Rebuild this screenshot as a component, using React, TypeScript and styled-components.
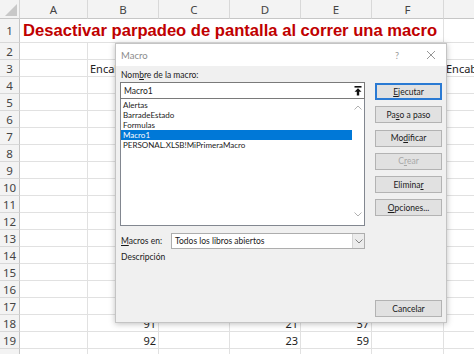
import React from 'react';
import styled, { createGlobalStyle } from 'styled-components';

const GlobalStyle = createGlobalStyle`
  html, body {
    margin: 0;
    padding: 0;
    background: #ffffff;
  }
  body {
    width: 474px;
    height: 354px;
    overflow: hidden;
    font-family: "Noto Sans", sans-serif;
  }
`;

const COLUMNS = ['A', 'B', 'C', 'D', 'E', 'F', 'G', ''];

// cell values by row number -> column letter
const DATA: Record<number, Record<string, string>> = {
  3: { B: 'Encabezado 1', G: 'Encabezado 5' },
  18: { B: '91', D: '21', E: '37' },
  19: { B: '92', D: '23', E: '59' },
  20: { B: '69', D: '90', E: '59' },
};

const NUMERIC = /^\d+$/;

const MACROS = ['Alertas', 'BarradeEstado', 'Formulas', 'Macro1', 'PERSONAL.XLSB!MiPrimeraMacro'];

const App = () => (
  <>
    <GlobalStyle />
    <Sheet>
      <Grid>
        <Corner>
          <svg width="12" height="12" viewBox="0 0 12 12">
            <polygon points="12,0 12,12 0,12" fill="#c8c8c8" />
          </svg>
        </Corner>
        {COLUMNS.map((c, i) => (
          <ColHeader key={i}>{c}</ColHeader>
        ))}

        <RowHeader>1</RowHeader>
        <TitleCell>Desactivar parpadeo de pantalla al correr una macro</TitleCell>
        <Cell />
        <Cell />

        {Array.from({ length: 19 }, (_, i) => i + 2).map(row => (
          <React.Fragment key={row}>
            <RowHeader>{row}</RowHeader>
            {COLUMNS.map((c, i) => {
              const value = (DATA[row] && DATA[row][c]) || '';
              return (
                <Cell key={i} $right={NUMERIC.test(value)}>
                  {value}
                </Cell>
              );
            })}
          </React.Fragment>
        ))}
      </Grid>

      <Dialog>
        <TitleBar>
          <DialogTitle>Macro</DialogTitle>
          <TitleButtons>
            <Help>?</Help>
            <svg width="10" height="10" viewBox="0 0 10 10">
              <path d="M1 1 L9 9 M9 1 L1 9" stroke="#8a8a8a" strokeWidth="0.9" />
            </svg>
          </TitleButtons>
        </TitleBar>

        <Body>
          <LeftColumn>
            <Label>
              Nom<u>b</u>re de la macro:
            </Label>
            <NameInput>
              <span>Macro1</span>
              <InputIcon>
                <svg width="8" height="10" viewBox="0 0 8 10">
                  <rect x="0.5" y="0" width="7" height="1.6" fill="#111" />
                  <path d="M4 2.2 L7.5 5.8 L5.2 5.8 L5.2 9.6 L2.8 9.6 L2.8 5.8 L0.5 5.8 Z" fill="#111" />
                </svg>
              </InputIcon>
            </NameInput>
            <MacroList>
              <Items>
                {MACROS.map(m => (
                  <Item key={m} $selected={m === 'Macro1'}>
                    {m}
                  </Item>
                ))}
              </Items>
              <Scrollbar>
                <svg width="8" height="5" viewBox="0 0 8 5">
                  <path d="M0.5 4.5 L4 1 L7.5 4.5" stroke="#a8a8a8" fill="none" strokeWidth="0.9" />
                </svg>
                <svg width="8" height="5" viewBox="0 0 8 5">
                  <path d="M0.5 0.5 L4 4 L7.5 0.5" stroke="#a8a8a8" fill="none" strokeWidth="0.9" />
                </svg>
              </Scrollbar>
            </MacroList>

            <ComboRow>
              <Label>
                <u>M</u>acros en:
              </Label>
              <Combo>
                <span>Todos los libros abiertos</span>
                <ComboArrow>
                  <svg width="8" height="5" viewBox="0 0 8 5">
                    <path d="M0.5 0.5 L4 4 L7.5 0.5" stroke="#777" fill="none" strokeWidth="0.9" />
                  </svg>
                </ComboArrow>
              </Combo>
            </ComboRow>
            <Description>Descripción</Description>
          </LeftColumn>

          <Buttons>
            <Button $focused>
              <u>E</u>jecutar
            </Button>
            <Button>
              Pa<u>s</u>o a paso
            </Button>
            <Button>
              Mo<u>d</u>ificar
            </Button>
            <Button $disabled>
              C<u>r</u>ear
            </Button>
            <Button>
              Elimina<u>r</u>
            </Button>
            <Button>
              <u>O</u>pciones...
            </Button>
            <CancelButton>Cancelar</CancelButton>
          </Buttons>
        </Body>
      </Dialog>
    </Sheet>
  </>
);

const Sheet = styled.div`
  position: relative;
  width: 474px;
  height: 354px;
  overflow: hidden;
`;

const Grid = styled.div`
  display: grid;
  grid-template-columns: 20px 68px 71px 71px 71px 71px 72px 72px 40px;
  grid-template-rows: 19px 24px repeat(19, 17px);
  font-family: "Noto Sans", sans-serif;
  color: #222;
`;

const Corner = styled.div`
  background: #f3f3f3;
  border-right: 1px solid #d4d4d4;
  border-bottom: 1px solid #c6c6c6;
  display: flex;
  align-items: flex-end;
  justify-content: flex-end;
  padding: 0 2px 2px 0;
`;

const ColHeader = styled.div`
  background: #f3f3f3;
  border-right: 1px solid #d8d8d8;
  border-bottom: 1px solid #c6c6c6;
  display: flex;
  align-items: center;
  justify-content: center;
  font-size: 11.5px;
  color: #444;
`;

const RowHeader = styled.div`
  background: #f3f3f3;
  border-right: 1px solid #c6c6c6;
  border-bottom: 1px solid #d8d8d8;
  display: flex;
  align-items: center;
  justify-content: center;
  font-size: 11.5px;
  color: #444;
`;

const Cell = styled.div<{ $right?: boolean }>`
  border-right: 1px solid #e1e1e1;
  border-bottom: 1px solid #e1e1e1;
  display: flex;
  align-items: center;
  justify-content: ${p => (p.$right ? 'flex-end' : 'flex-start')};
  padding: 0 2px;
  font-size: 11px;
  white-space: nowrap;
  overflow: visible;
  min-width: 0;
`;

const TitleCell = styled.div`
  grid-column: 2 / 8;
  border-bottom: 1px solid #e1e1e1;
  border-right: 1px solid #e1e1e1;
  display: flex;
  align-items: center;
  padding: 0 3px;
  font-family: "Liberation Sans", Arial, sans-serif;
  font-weight: bold;
  font-size: 16.6px;
  color: #c00000;
  white-space: nowrap;
`;

const Dialog = styled.div`
  position: absolute;
  left: 115px;
  top: 43px;
  width: 332px;
  height: 280px;
  box-sizing: border-box;
  border: 1px solid #c4c4c4;
  box-shadow: 0 1px 6px rgba(0, 0, 0, 0.25);
  background: #f0f0f0;
  display: flex;
  flex-direction: column;
  font-family: Lato, "Noto Sans", sans-serif;
  font-size: 8.5px;
  color: #1a1a1a;
`;

const TitleBar = styled.div`
  height: 22px;
  background: #ffffff;
  display: flex;
  align-items: center;
  justify-content: space-between;
  padding: 0 10px 0 5px;
  flex-shrink: 0;
`;

const DialogTitle = styled.span`
  font-size: 9.5px;
  color: #8c8c8c;
`;

const TitleButtons = styled.div`
  display: flex;
  align-items: center;
  gap: 27px;
`;

const Help = styled.span`
  font-size: 9px;
  color: #9a9a9a;
`;

const Body = styled.div`
  flex: 1;
  display: flex;
  padding: 3px 4px 5px 4px;
  gap: 10px;
`;

const LeftColumn = styled.div`
  width: 245px;
  display: flex;
  flex-direction: column;
`;

const Label = styled.div`
  line-height: 13px;
  padding-left: 1px;
  white-space: nowrap;
`;

const NameInput = styled.div`
  height: 17px;
  box-sizing: border-box;
  border: 1px solid #7a7a7a;
  background: #fff;
  display: flex;
  align-items: center;
  justify-content: space-between;
  padding-left: 3px;
`;

const InputIcon = styled.div`
  width: 12px;
  height: 100%;
  display: flex;
  align-items: center;
  justify-content: center;
`;

const MacroList = styled.div`
  height: 127px;
  box-sizing: border-box;
  border: 1px solid #828790;
  border-top: none;
  background: #fff;
  display: flex;
`;

const Items = styled.div`
  flex: 1;
  padding-top: 1px;
`;

const Item = styled.div<{ $selected?: boolean }>`
  height: 10px;
  line-height: 10px;
  padding-left: 2px;
  font-size: 8px;
  background: ${p => (p.$selected ? '#0078d7' : 'transparent')};
  color: ${p => (p.$selected ? '#ffffff' : '#1a1a1a')};
  white-space: nowrap;
`;

const Scrollbar = styled.div`
  width: 12px;
  display: flex;
  flex-direction: column;
  justify-content: space-between;
  align-items: center;
  padding: 6px 0 8px;
  background: #fff;
`;

const ComboRow = styled.div`
  display: flex;
  align-items: center;
  margin-top: 7px;
  gap: 9px;
`;

const Combo = styled.div`
  width: 198px;
  height: 16px;
  box-sizing: border-box;
  border: 1px solid #adadad;
  background: #fff;
  display: flex;
  align-items: center;
  justify-content: space-between;
  padding-left: 3px;
`;

const ComboArrow = styled.div`
  width: 12px;
  height: 100%;
  box-sizing: border-box;
  border-left: 1px solid #d4d4d4;
  background: #ececec;
  display: flex;
  align-items: center;
  justify-content: center;
`;

const Description = styled(Label)`
  margin-top: 2px;
`;

const Buttons = styled.div`
  width: 67px;
  display: flex;
  flex-direction: column;
  gap: 6.3px;
  padding-top: 14px;
`;

const Button = styled.div<{ $focused?: boolean; $disabled?: boolean }>`
  height: 17px;
  box-sizing: border-box;
  border: 1px solid ${p => (p.$focused ? '#2a7ad3' : '#b3b3b3')};
  box-shadow: ${p => (p.$focused ? 'inset 0 0 0 1px #2a7ad3' : 'none')};
  background: #e1e1e1;
  display: flex;
  align-items: center;
  justify-content: center;
  color: ${p => (p.$disabled ? '#a8a8a8' : '#1a1a1a')};
  white-space: nowrap;
`;

const CancelButton = styled(Button)`
  margin-top: auto;
`;

export default App;
